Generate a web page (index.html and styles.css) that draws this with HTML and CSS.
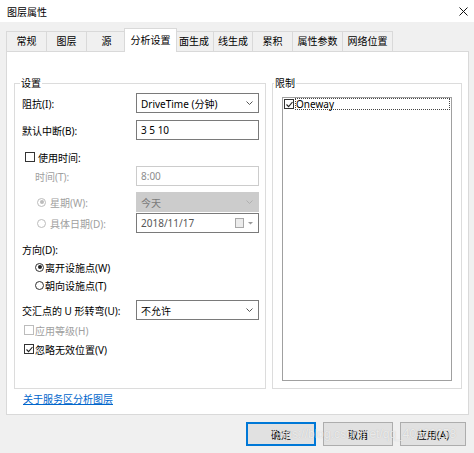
FILE: index.html
```html
<!DOCTYPE html>
<html lang="zh-CN">
<head>
    <meta charset="UTF-8">
    <title>图层属性</title>
    <link rel="stylesheet" href="styles.css">
</head>
<body>

    <!-- title bar -->
    <div class="titlebar">
        <span>图层属性</span>
        <svg class="close" width="9" height="9" viewBox="0 0 9 9"><path d="M0.5 0.5L8.5 8.5M8.5 0.5L0.5 8.5" stroke="#111" stroke-width="1"/></svg>
    </div>

    <!-- tabs -->
    <div class="tabs">
        <div class="tab">常规</div>
        <div class="tab">图层</div>
        <div class="tab">源</div>
        <div class="tab selected">分析设置</div>
        <div class="tab w3">面生成</div>
        <div class="tab w3">线生成</div>
        <div class="tab">累积</div>
        <div class="tab w4">属性参数</div>
        <div class="tab w4">网络位置</div>
    </div>

    <div class="panel">
        <div class="groups">
            <fieldset class="group settings">
                <legend>设置</legend>

                <div class="row first">
                    <span class="lbl">阻抗(I):</span>
                    <div class="field combo">DriveTime (分钟)<svg class="chev" width="7" height="4" viewBox="0 0 7 4"><path d="M0.5 0.5L3.5 3.5L6.5 0.5" fill="none" stroke="#555"/></svg></div>
                </div>

                <div class="row">
                    <span class="lbl">默认中断(B):</span>
                    <div class="field">3 5 10</div>
                </div>

                <div class="row check-row use-time">
                    <span class="box"></span><span>使用时间:</span>
                </div>

                <div class="row tight">
                    <span class="lbl indent off">时间(T):</span>
                    <div class="field disabled">8:00</div>
                </div>

                <div class="row week">
                    <span class="lbl indent2 off"><span class="radio on dis"></span>星期(W):</span>
                    <div class="field combo disabled grey">今天<svg class="chev" width="7" height="4" viewBox="0 0 7 4"><path d="M0.5 0.5L3.5 3.5L6.5 0.5" fill="none" stroke="#b0b0b0"/></svg></div>
                </div>

                <div class="row date">
                    <span class="lbl indent2 off"><span class="radio dis"></span>具体日期(D):</span>
                    <div class="field combo datebox">2018/11/17<svg width="20" height="10" viewBox="0 0 20 10"><rect x="0.5" y="0.5" width="8" height="9" fill="#ececec" stroke="#a8a8a8"/><path d="M13 4H18L15.5 6.5Z" fill="#999"/></svg></div>
                </div>

                <div class="row small dir">
                    <span>方向(D):</span>
                </div>
                <div class="row small opt">
                    <span class="radio on"></span><span>离开设施点(W)</span>
                </div>
                <div class="row small opt">
                    <span class="radio"></span><span>朝向设施点(T)</span>
                </div>

                <div class="row">
                    <span class="lbl">交汇点的 U 形转弯(U):</span>
                    <div class="field combo">不允许<svg class="chev" width="7" height="4" viewBox="0 0 7 4"><path d="M0.5 0.5L3.5 3.5L6.5 0.5" fill="none" stroke="#555"/></svg></div>
                </div>

                <div class="row small check-row off">
                    <span class="box dis"></span><span>应用等级(H)</span>
                </div>
                <div class="row small check-row last">
                    <span class="box"><svg width="7" height="7" viewBox="0 0 7 7"><path d="M0.5 3.5L2.6 5.6L6.5 1" fill="none" stroke="#222" stroke-width="1.1"/></svg></span><span>忽略无效位置(V)</span>
                </div>
            </fieldset>

            <fieldset class="group restrict">
                <legend>限制</legend>
                <div class="listbox">
                    <div class="item">
                        <span class="box"><svg width="7" height="7" viewBox="0 0 7 7"><path d="M0.5 3.5L2.6 5.6L6.5 1" fill="none" stroke="#222" stroke-width="1.1"/></svg></span>
                        <span class="item-text">Oneway</span>
                    </div>
                </div>
            </fieldset>
        </div>

        <a class="link" href="#">关于服务区分析图层</a>
    </div>

    <div class="buttons">
        <button class="btn default">确定</button>
        <button class="btn">取消</button>
        <button class="btn apply">应用(A)</button>
    </div>

    <div class="watermark">https://blog.csdn.net/qq_40420258</div>

</body>
</html>
```

FILE: styles.css
```css
body {
    margin: 0;
    width: 474px;
    height: 453px;
    overflow: hidden;
    position: relative;
    background: #f0f0f0;
    font-family: "Noto Sans", "Noto Sans CJK SC", sans-serif;
    font-size: 10px;
    color: #000;
}
.titlebar {
    height: 22px;
    background: #fff;
    display: flex;
    align-items: center;
    justify-content: space-between;
    padding: 0 6px 0 7px;
}
.close {
    display: block;
}

/* tabs */
.tabs {
    display: flex;
    align-items: flex-end;
    height: 20px;
    margin-top: 9px;
    padding-left: 6px;
}
.tab {
    box-sizing: border-box;
    width: 41px;
    height: 20px;
    margin-left: -1px;
    border: 1px solid #d9d9d9;
    border-bottom: none;
    background: #f0f0f0;
    text-align: center;
    line-height: 19px;
}
.tab:first-child {
    margin-left: 0;
}
.tab.w3 {
    width: 40px;
}
.tab.w4 {
    width: 51px;
}
.tab.selected {
    width: 53px;
    height: 24px;
    margin: 0 -2px -1px -3px;
    background: #fff;
    line-height: 22px;
    position: relative;
    z-index: 1;
}

/* panel */
.panel {
    box-sizing: border-box;
    height: 364px;
    margin: 0 5px 0 6px;
    padding: 23px 6px 0 7px;
    background: #fff;
    border: 1px solid #d9d9d9;
}
.groups {
    display: flex;
    gap: 6px;
    height: 314px;
}
.group {
    box-sizing: border-box;
    margin: 0;
    min-width: 0;
    border: 1px solid #dcdcdc;
}
.group legend {
    padding: 0 1px;
    line-height: 16px;
}
.settings {
    width: 252px;
    padding: 0 6px 0 7px;
}
.settings legend {
    margin-left: -2px;
}
.restrict {
    flex: 1;
    padding: 0 9px;
}
.restrict legend {
    margin-left: -8px;
}

/* rows */
.row {
    display: flex;
    align-items: center;
    height: 20px;
    margin-top: 7px;
}
.row.first {
    margin-top: 2px;
}
.row.use-time {
    height: 18px;
    margin-top: 8px;
}
.row.tight {
    margin-top: 0;
}
.row.week {
    margin-top: 6px;
}
.row.date {
    margin-top: 1px;
}
.row.small {
    height: 16px;
    margin-top: 2px;
}
.row.dir {
    margin-top: 8px;
}
.row.last {
    margin-top: 3px;
}
.lbl {
    box-sizing: border-box;
    width: 114px;
    flex: none;
    display: flex;
    align-items: center;
    white-space: nowrap;
}
.lbl.indent {
    padding-left: 13px;
}
.lbl.indent2 {
    padding-left: 15px;
}
.off {
    color: #a0a0a0;
}
.field {
    box-sizing: border-box;
    width: 123px;
    height: 20px;
    padding: 0 5px 0 4px;
    border: 1px solid #7a7a7a;
    background: #fff;
    display: flex;
    align-items: center;
}
.combo {
    justify-content: space-between;
}
.field.disabled {
    border-color: #cccccc;
    color: #8d8d8d;
}
.field.grey {
    background: #cccccc;
    color: #7a7a7a;
}
.datebox {
    color: #555;
    padding-right: 3px;
}

/* check boxes and radios */
.box {
    box-sizing: border-box;
    width: 10px;
    height: 10px;
    flex: none;
    border: 1px solid #333;
    background: #fff;
    margin-right: 1px;
    display: flex;
    align-items: center;
    justify-content: center;
}
.box svg {
    display: block;
}
.box.dis {
    border-color: #bcbcbc;
}
.check-row {
    padding-left: 2px;
}
.use-time .box {
    margin-left: 1px;
    margin-right: 3px;
}
.radio {
    box-sizing: border-box;
    width: 9px;
    height: 9px;
    flex: none;
    border: 1px solid #333;
    border-radius: 50%;
    background: #fff;
    margin-right: 1px;
    display: flex;
    align-items: center;
    justify-content: center;
}
.radio.on::after {
    content: "";
    width: 4px;
    height: 4px;
    border-radius: 50%;
    background: #222;
}
.radio.dis {
    border-color: #bcbcbc;
    margin-right: 4px;
}
.radio.dis.on::after {
    background: #bcbcbc;
}
.opt {
    padding-left: 13px;
}

/* restrictions list */
.listbox {
    box-sizing: border-box;
    height: 284px;
    margin-top: 6px;
    border: 1px solid #a0a0a0;
    background: #fff;
}
.item {
    display: flex;
    align-items: center;
    height: 12px;
    margin: 0 1px;
}
.item .box {
    margin-right: 1px;
}
.item-text {
    flex: 1;
    height: 12px;
    box-sizing: border-box;
    border: 1px dotted #444;
    line-height: 10px;
}

.link {
    display: inline-block;
    margin: 2px 0 0 9px;
    line-height: 16px;
    color: #0066cc;
    text-decoration: underline;
}

/* buttons */
.buttons {
    display: flex;
    justify-content: flex-end;
    gap: 7px;
    margin-top: 7px;
    padding-right: 8px;
}
.btn {
    box-sizing: border-box;
    width: 70px;
    height: 24px;
    padding: 0;
    font: inherit;
    color: #000;
    background: #e1e1e1;
    border: 1px solid #adadad;
}
.btn.default {
    border-color: #0078d7;
    box-shadow: inset 0 0 0 1px #0078d7;
}
.btn.apply {
    width: 66px;
}

/* faint watermark laid over the button row */
.watermark {
    position: absolute;
    left: 272px;
    top: 427px;
    font-family: "Liberation Sans", sans-serif;
    font-size: 12px;
    color: rgba(255, 255, 255, 0.7);
    text-shadow: 0 0 1px rgba(0, 0, 0, 0.2);
}
```
